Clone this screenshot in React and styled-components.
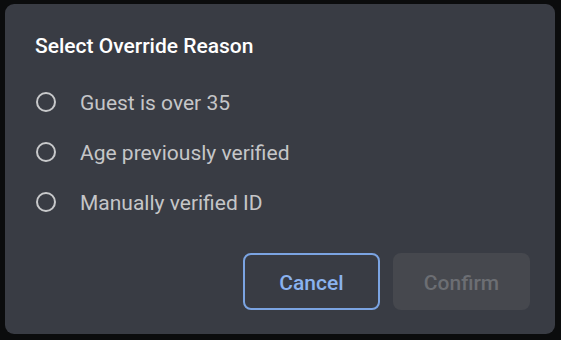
import styled, { createGlobalStyle } from "styled-components";

const GlobalStyle = createGlobalStyle`
  html, body {
    margin: 0;
    padding: 0;
    background: #0b0c0d;
  }
  body {
    font-family: Roboto, "Liberation Sans", sans-serif;
  }
`;

const reasons = ["Guest is over 35", "Age previously verified", "Manually verified ID"];

const App = () => {
  return (
    <>
      <GlobalStyle />
      <Backdrop>
        <Dialog>
          <Title>Select Override Reason</Title>
          <Options>
            {reasons.map((r) => (
              <Option key={r}>
                <Radio type="radio" name="reason" />
                <Label>{r}</Label>
              </Option>
            ))}
          </Options>
          <Actions>
            <Button variant="outline">Cancel</Button>
            <Button variant="disabled" disabled>
              Confirm
            </Button>
          </Actions>
        </Dialog>
      </Backdrop>
    </>
  );
};

export default App;

const Backdrop = styled.div`
  width: 561px;
  height: 340px;
  box-sizing: border-box;
  padding: 4px 6px 6px 5px;
`;

const Dialog = styled.div`
  width: 550px;
  height: 330px;
  box-sizing: border-box;
  background: #393c44;
  border-radius: 9px;
  padding: 30px 25px 24px 30px;
  display: flex;
  flex-direction: column;
`;

const Title = styled.h2`
  margin: 0;
  font-size: 21px;
  line-height: 25px;
  font-weight: 500;
  color: #ffffff;
`;

const Options = styled.div`
  margin-top: 18px;
  display: flex;
  flex-direction: column;
`;

const Option = styled.label`
  height: 50px;
  display: flex;
  align-items: center;
  gap: 24px;
  cursor: pointer;
`;

const Radio = styled.input`
  appearance: none;
  margin: 0 0 0 1px;
  width: 20px;
  height: 20px;
  box-sizing: border-box;
  border: 2px solid #c8c9cb;
  border-radius: 50%;
  background: transparent;
`;

const Label = styled.span`
  font-size: 21px;
  line-height: 25px;
  color: #c5c6c8;
  padding-top: 2px;
`;

const Actions = styled.div`
  margin-top: 26px;
  display: flex;
  justify-content: flex-end;
  gap: 13px;
`;

const Button = styled.button`
  width: 137px;
  height: 57px;
  box-sizing: border-box;
  border-radius: 8px;
  font-family: Roboto, "Liberation Sans", sans-serif;
  font-size: 21px;
  font-weight: 500;
  padding: 2px 0 0;
  border: ${(p) => (p.variant === "outline" ? "2px solid #7ba4e2" : "none")};
  background: ${(p) => (p.variant === "outline" ? "transparent" : "#46484e")};
  color: ${(p) => (p.variant === "outline" ? "#8ab2ef" : "#6c6e73")};
  cursor: ${(p) => (p.disabled ? "default" : "pointer")};
`;
